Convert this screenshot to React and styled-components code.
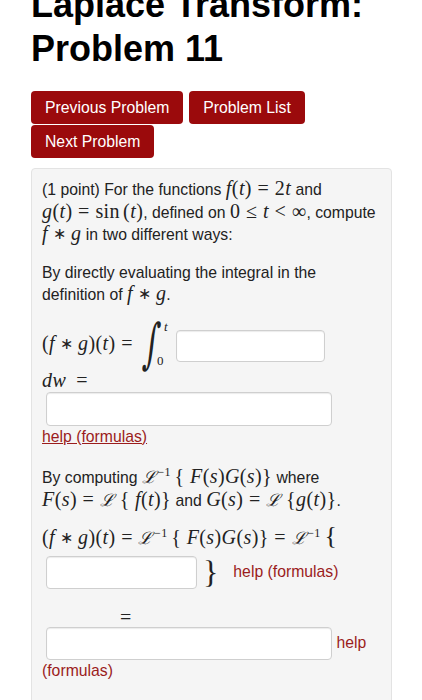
import React from "react"
import styled, { createGlobalStyle } from "styled-components"

const GlobalStyle = createGlobalStyle`
  html, body { margin: 0; padding: 0; background: #fff; }
  body { font-family: "Liberation Sans", Arial, sans-serif; color: #222; }
`

const Page = styled.div`
  padding: 0 30px 0 31px;
`

const Title = styled.h1`
  margin: -17px 0 0;
  font-size: 36px;
  line-height: 44px;
  font-weight: bold;
  color: #000;
`

const ButtonBar = styled.div`
  display: flex;
  flex-wrap: wrap;
  gap: 1px 6px;
  margin-top: 20px;
`

const NavButton = styled.button`
  height: 33px;
  padding: 0 14px;
  border: none;
  border-radius: 4px;
  background: #9b0a0c;
  color: #fff;
  font-family: "Liberation Sans", Arial, sans-serif;
  font-size: 15.75px;
`

const ProblemBox = styled.div`
  margin-top: 10px;
  padding: 10px 10px 40px;
  background: #f5f5f5;
  border: 1px solid #e3e3e3;
  border-radius: 4px;
  font-size: 15.75px;
  line-height: 22.5px;
`

const Para = styled.div`
  margin-top: ${p => p.$mt || 0}px;
`

const Line = styled.div`
  white-space: nowrap;
`

const M = styled.span`
  font-family: "Liberation Serif", "Times New Roman", serif;
  font-size: 20px;
  line-height: 19px;
  letter-spacing: 0.4px;
`

const Mi = styled.i`
  font-style: italic;
`

const Op = styled.span`
  margin: 0 ${p => p.$sp ?? 0.28}em;
`

const Star = styled.span`
  font-family: "Liberation Serif", serif;
  font-size: 0.8em;
  margin: 0 0.3em;
  vertical-align: 1px;
`

const Fn = styled.span`
  margin-right: 0.16em;
`

const Cal = styled.span`
  font-family: "DejaVu Serif", serif;
  font-style: italic;
  font-size: 0.85em;
`

const Sup = styled.sup`
  font-size: 12px;
  line-height: 0;
  vertical-align: 7px;
  margin: 0 0.3em 0 0.1em;
`

const BigBrace = styled.span`
  font-family: "Liberation Serif", serif;
  font-size: 26px;
  line-height: 20px;
  font-weight: 300;
`

const IntegralRow = styled.div`
  display: flex;
  align-items: center;
  height: 50px;
  margin-top: 12px;
`

const IntegralSign = styled.span`
  display: inline-flex;
  align-items: stretch;
  margin-left: 6px;
  height: 46px;
`

const IntGlyph = styled.span`
  font-family: "DejaVu Serif", serif;
  font-size: 30px;
  line-height: 46px;
  display: inline-block;
  transform: scaleY(1.8) skewX(-10deg);
`

const Limits = styled.span`
  display: flex;
  flex-direction: column;
  justify-content: space-between;
  font-family: "Liberation Serif", serif;
  font-size: 13px;
  line-height: 12px;
`

const Upper = styled.i`
  margin-left: 4px;
`

const Lower = styled.span`
  margin-left: -3px;
`

const MathLine = styled.div`
  font-family: "Liberation Serif", "Times New Roman", serif;
  font-size: 20px;
  line-height: ${p => p.$lh || 22}px;
  letter-spacing: 0.4px;
  white-space: nowrap;
  margin-top: ${p => p.$mt || 0}px;
  padding-left: ${p => p.$pl || 0}px;
`

const AnswerInput = styled.input`
  box-sizing: border-box;
  width: ${p => p.$w}px;
  height: ${p => p.$h || 33}px;
  margin: ${p => p.$mt || 0}px 0 0 ${p => p.$ml ?? 4}px;
  border: 1px solid #cfcfcf;
  border-radius: 4px;
  background: #fff;
  box-shadow: inset 0 1px 1px rgba(0, 0, 0, 0.08);
  vertical-align: middle;
  display: ${p => (p.$block ? "block" : "inline-block")};
`

const HelpLink = styled.a`
  color: #9b1c1c;
  text-decoration: ${p => (p.$underline ? "underline" : "none")};
  cursor: pointer;
`

const AnswerRow = styled.div`
  display: flex;
  align-items: center;
  margin-top: 7px;
`

const CloseBrace = styled.span`
  font-family: "Liberation Serif", serif;
  font-size: 32px;
  font-weight: 300;
  margin: 0 15px 0 6px;
  line-height: 33px;
`

const InlineAnswer = styled.div`
  margin-top: 1px;
`

const FG = () => (
  <>
    (<Mi>f</Mi>
    <Star>∗</Star>
    <Mi>g</Mi>)(<Mi>t</Mi>)
  </>
)

const Linv = () => (
  <>
    <Cal>ℒ</Cal>
    <Sup>−1</Sup>
  </>
)

export default function App() {
  return (
    <Page>
      <GlobalStyle />
      <Title>
        Laplace Transform:
        <br />
        Problem 11
      </Title>

      <ButtonBar>
        <NavButton>Previous Problem</NavButton>
        <NavButton>Problem List</NavButton>
        <NavButton>Next Problem</NavButton>
      </ButtonBar>

      <ProblemBox>
        <Para>
          <Line>
            (1 point) For the functions{" "}
            <M>
              <Mi>f</Mi>(<Mi>t</Mi>)<Op>=</Op>2<Mi>t</Mi>
            </M>{" "}
            and
          </Line>
          <Line>
            <M>
              <Mi>g</Mi>(<Mi>t</Mi>)<Op>=</Op>
              <Fn>sin</Fn>(<Mi>t</Mi>)
            </M>
            , defined on{" "}
            <M>
              0<Op>≤</Op>
              <Mi>t</Mi>
              <Op>&lt;</Op>∞
            </M>
            , compute
          </Line>
          <Line>
            <M>
              <Mi>f</Mi>
              <Star>∗</Star>
              <Mi>g</Mi>
            </M>{" "}
            in two different ways:
          </Line>
        </Para>

        <Para $mt={15}>
          <Line>By directly evaluating the integral in the</Line>
          <Line>
            definition of{" "}
            <M>
              <Mi>f</Mi>
              <Star>∗</Star>
              <Mi>g</Mi>
            </M>
            .
          </Line>
        </Para>

        <IntegralRow>
          <M>
            <FG />
            <Op>=</Op>
          </M>
          <IntegralSign>
            <IntGlyph>∫</IntGlyph>
            <Limits>
              <Upper>t</Upper>
              <Lower>0</Lower>
            </Limits>
          </IntegralSign>
          <AnswerInput $w={149} $h={32} $ml={8} $mt={4} />
        </IntegralRow>

        <MathLine>
          <Mi>dw</Mi>
          <Op $sp={0.5}>=</Op>
        </MathLine>
        <AnswerInput $block $w={286} $h={34} $mt={1} />
        <Para>
          <HelpLink $underline>help (formulas)</HelpLink>
        </Para>

        <Para $mt={19}>
          <Line>
            By computing{" "}
            <M>
              <Linv />
              {"{ "}
              <Mi>F</Mi>(<Mi>s</Mi>)<Mi>G</Mi>(<Mi>s</Mi>)
              {"}"}
            </M>{" "}
            where
          </Line>
          <Line>
            <M>
              <Mi>F</Mi>(<Mi>s</Mi>)<Op>=</Op>
              <Cal>ℒ</Cal> {"{ "}
              <Mi>f</Mi>(<Mi>t</Mi>){"}"}
            </M>{" "}
            and{" "}
            <M>
              <Mi>G</Mi>(<Mi>s</Mi>)<Op>=</Op>
              <Cal>ℒ</Cal> {"{"}
              <Mi>g</Mi>(<Mi>t</Mi>){"}"}
            </M>
            .
          </Line>
        </Para>

        <MathLine $mt={14}>
          <FG />
          <Op>=</Op>
          <Linv />
          {"{ "}
          <Mi>F</Mi>(<Mi>s</Mi>)<Mi>G</Mi>(<Mi>s</Mi>)
          {"}"}
          <Op>=</Op>
          <Linv />
          <BigBrace>{"{"}</BigBrace>
        </MathLine>

        <AnswerRow>
          <AnswerInput $w={151} $h={33} />
          <CloseBrace>{"}"}</CloseBrace>
          <HelpLink>help (formulas)</HelpLink>
        </AnswerRow>

        <MathLine $mt={19} $lh={18} $pl={78}>
          =
        </MathLine>

        <InlineAnswer>
          <AnswerInput $w={286} $h={33} /> <HelpLink>help (formulas)</HelpLink>
        </InlineAnswer>
      </ProblemBox>
    </Page>
  )
}
